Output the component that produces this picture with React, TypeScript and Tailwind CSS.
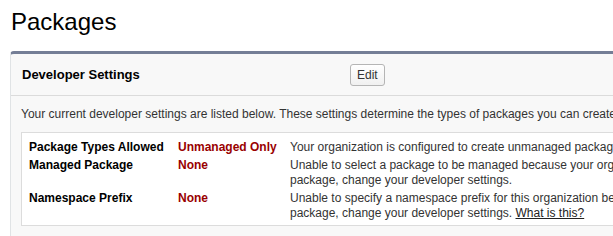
import React from "react";

const rows = [
  {
    label: "Package Types Allowed",
    value: "Unmanaged Only",
    lines: ["Your organization is configured to create unmanaged packages only."],
  },
  {
    label: "Managed Package",
    value: "None",
    lines: [
      "Unable to select a package to be managed because your organization is configured to create unmanaged packages only. To create a managed",
      "package, change your developer settings.",
    ],
  },
  {
    label: "Namespace Prefix",
    value: "None",
    lines: [
      "Unable to specify a namespace prefix for this organization because it is configured to create unmanaged packages only. To create a managed",
      "package, change your developer settings.",
    ],
    link: true,
  },
];

export default function App() {
  return (
    <div className="w-[613px] h-[236px] overflow-hidden bg-white text-[#222] font-['Liberation_Sans',Arial,sans-serif]">
      {/* Page title */}
      <h1 className="pt-[8px] pl-[11px] text-[24px] leading-[28px] font-normal text-[#000]">Packages</h1>

      {/* Page block */}
      <div className="mt-[15px] ml-[10px] w-[960px] h-[300px] bg-[#f8f8f8] border-t-[3px] border-t-[#747e96] border-l border-l-[#e0e3e5] rounded-tl-[4px]">
        <div className="flex items-center h-[42px] border-b border-b-[#dbdbdb]">
          <h2 className="w-[339px] shrink-0 pl-[11px] text-[13px] font-bold text-[#000]">Developer Settings</h2>
          <button className="h-[22px] px-[6px] text-[12px] text-[#333] border border-[#b5b5b5] rounded-[3px] bg-gradient-to-b from-white to-[#f0f0f0]">
            Edit
          </button>
        </div>

        <p className="pt-[11px] pl-[10px] text-[12px] leading-[15px] text-[#333] whitespace-nowrap">
          Your current developer settings are listed below. These settings determine the types of packages you can create.
        </p>

        {/* Detail list */}
        <div className="mt-[10px] ml-[10px] bg-white border border-[#dcdcdc] pt-[5px] pb-[3px] text-[12px] leading-[15px]">
          {rows.map((r) => (
            <div key={r.label} className="flex py-[1.5px]">
              <div className="w-[156px] shrink-0 pl-[7px] font-bold text-[#000] whitespace-nowrap">{r.label}</div>
              <div className="w-[112px] shrink-0 font-bold text-[#990000] whitespace-nowrap">{r.value}</div>
              <div className="shrink-0 text-[#333] whitespace-nowrap">
                {r.lines.map((l, i) => (
                  <div key={i}>
                    {l}
                    {r.link && i === r.lines.length - 1 && (
                      <>
                        {" "}
                        <a href="#" className="underline text-[#222]">What is this?</a>
                      </>
                    )}
                  </div>
                ))}
              </div>
            </div>
          ))}
        </div>
      </div>
    </div>
  );
}
